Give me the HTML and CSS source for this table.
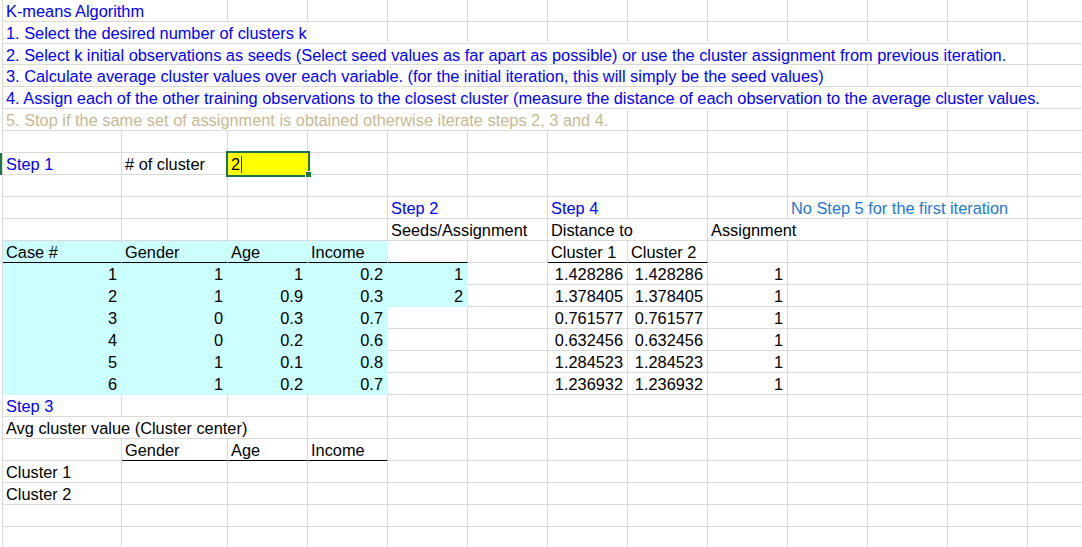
FILE: index.html
```html
<!DOCTYPE html>
<html>
<head>
<meta charset="utf-8">
<link rel="stylesheet" href="styles.css">
</head>
<body>
<div class="sheet">
  <!-- row 0 -->
  <div class="g"></div><div class="c span2 blue">K-means Algorithm</div>
  <div class="c"></div><div class="c"></div><div class="c"></div><div class="c"></div><div class="c"></div><div class="c"></div><div class="c"></div><div class="c"></div><div class="c"></div><div class="c"></div><div class="c"></div>
  <!-- row 1 -->
  <div class="g"></div><div class="c span4 blue">1. Select the desired number of clusters k</div>
  <div class="c"></div><div class="c"></div><div class="c"></div><div class="c"></div><div class="c"></div><div class="c"></div><div class="c"></div><div class="c"></div><div class="c"></div>
  <!-- row 2 -->
  <div class="g"></div><div class="c span12 blue">2. Select k initial observations as seeds (Select seed values as far apart as possible) or use the cluster assignment from previous iteration.</div>
  <div class="c"></div>
  <!-- row 3 -->
  <div class="g"></div><div class="c span10 blue">3. Calculate average cluster values over each variable. (for the initial iteration, this will simply be the seed values)</div>
  <div class="c"></div><div class="c"></div><div class="c"></div>
  <!-- row 4 -->
  <div class="g"></div><div class="c span13 blue">4. Assign each of the other training observations to the closest cluster (measure the distance of each observation to the average cluster values.</div>
  <!-- row 5 -->
  <div class="g"></div><div class="c span7 tan">5. Stop if the same set of assignment is obtained otherwise iterate steps 2, 3 and 4.</div>
  <div class="c"></div><div class="c"></div><div class="c"></div><div class="c"></div><div class="c"></div><div class="c"></div>
  <!-- row 6 -->
  <div class="g"></div>
  <div class="c"></div><div class="c"></div><div class="c"></div><div class="c"></div><div class="c"></div><div class="c"></div><div class="c"></div><div class="c"></div><div class="c"></div><div class="c"></div><div class="c"></div><div class="c"></div><div class="c"></div>
  <!-- row 7 -->
  <div class="g act"></div><div class="c blue">Step 1</div><div class="c"># of cluster</div>
  <div class="c sel">2<span class="caret"></span><span class="handle"></span></div>
  <div class="c"></div><div class="c"></div><div class="c"></div><div class="c"></div><div class="c"></div><div class="c"></div><div class="c"></div><div class="c"></div><div class="c"></div><div class="c"></div>
  <!-- row 8 -->
  <div class="g"></div>
  <div class="c"></div><div class="c"></div><div class="c"></div><div class="c"></div><div class="c"></div><div class="c"></div><div class="c"></div><div class="c"></div><div class="c"></div><div class="c"></div><div class="c"></div><div class="c"></div><div class="c"></div>
  <!-- row 9 -->
  <div class="g"></div>
  <div class="c"></div><div class="c"></div><div class="c"></div><div class="c"></div>
  <div class="c blue">Step 2</div><div class="c"></div><div class="c blue">Step 4</div><div class="c"></div><div class="c"></div>
  <div class="c span3 lblue">No Step 5 for the first iteration</div><div class="c"></div>
  <!-- row 10 -->
  <div class="g"></div>
  <div class="c"></div><div class="c"></div><div class="c"></div><div class="c"></div>
  <div class="c span2">Seeds/Assignment</div><div class="c span2">Distance to</div><div class="c span2">Assignment</div>
  <div class="c"></div><div class="c"></div><div class="c"></div>
  <!-- row 11 -->
  <div class="g"></div>
  <div class="c cy ul">Case #</div><div class="c cy ul">Gender</div><div class="c cy ul">Age</div><div class="c cy ul">Income</div>
  <div class="c ul"></div><div class="c"></div><div class="c ul">Cluster 1</div><div class="c ul">Cluster 2</div>
  <div class="c"></div><div class="c"></div><div class="c"></div><div class="c"></div><div class="c"></div>
  <!-- row 12 -->
  <div class="g"></div>
  <div class="c cy num">1</div><div class="c cy num">1</div><div class="c cy num">1</div><div class="c cy num">0.2</div>
  <div class="c cy num">1</div><div class="c"></div>
  <div class="c num">1.428286</div><div class="c num">1.428286</div><div class="c num">1</div>
  <div class="c"></div><div class="c"></div><div class="c"></div><div class="c"></div>
  <!-- row 13 -->
  <div class="g"></div>
  <div class="c cy num">2</div><div class="c cy num">1</div><div class="c cy num">0.9</div><div class="c cy num">0.3</div>
  <div class="c cy num">2</div><div class="c"></div>
  <div class="c num">1.378405</div><div class="c num">1.378405</div><div class="c num">1</div>
  <div class="c"></div><div class="c"></div><div class="c"></div><div class="c"></div>
  <!-- row 14 -->
  <div class="g"></div>
  <div class="c cy num">3</div><div class="c cy num">0</div><div class="c cy num">0.3</div><div class="c cy num">0.7</div>
  <div class="c"></div><div class="c"></div>
  <div class="c num">0.761577</div><div class="c num">0.761577</div><div class="c num">1</div>
  <div class="c"></div><div class="c"></div><div class="c"></div><div class="c"></div>
  <!-- row 15 -->
  <div class="g"></div>
  <div class="c cy num">4</div><div class="c cy num">0</div><div class="c cy num">0.2</div><div class="c cy num">0.6</div>
  <div class="c"></div><div class="c"></div>
  <div class="c num">0.632456</div><div class="c num">0.632456</div><div class="c num">1</div>
  <div class="c"></div><div class="c"></div><div class="c"></div><div class="c"></div>
  <!-- row 16 -->
  <div class="g"></div>
  <div class="c cy num">5</div><div class="c cy num">1</div><div class="c cy num">0.1</div><div class="c cy num">0.8</div>
  <div class="c"></div><div class="c"></div>
  <div class="c num">1.284523</div><div class="c num">1.284523</div><div class="c num">1</div>
  <div class="c"></div><div class="c"></div><div class="c"></div><div class="c"></div>
  <!-- row 17 -->
  <div class="g"></div>
  <div class="c cy num">6</div><div class="c cy num">1</div><div class="c cy num">0.2</div><div class="c cy num">0.7</div>
  <div class="c"></div><div class="c"></div>
  <div class="c num">1.236932</div><div class="c num">1.236932</div><div class="c num">1</div>
  <div class="c"></div><div class="c"></div><div class="c"></div><div class="c"></div>
  <!-- row 18 -->
  <div class="g"></div><div class="c blue">Step 3</div>
  <div class="c"></div><div class="c"></div><div class="c"></div><div class="c"></div><div class="c"></div><div class="c"></div><div class="c"></div><div class="c"></div><div class="c"></div><div class="c"></div><div class="c"></div><div class="c"></div>
  <!-- row 19 -->
  <div class="g"></div><div class="c span3">Avg cluster value (Cluster center)</div>
  <div class="c"></div><div class="c"></div><div class="c"></div><div class="c"></div><div class="c"></div><div class="c"></div><div class="c"></div><div class="c"></div><div class="c"></div><div class="c"></div>
  <!-- row 20 -->
  <div class="g"></div><div class="c"></div><div class="c ul">Gender</div><div class="c ul">Age</div><div class="c ul">Income</div>
  <div class="c"></div><div class="c"></div><div class="c"></div><div class="c"></div><div class="c"></div><div class="c"></div><div class="c"></div><div class="c"></div><div class="c"></div>
  <!-- row 21 -->
  <div class="g"></div><div class="c">Cluster 1</div>
  <div class="c"></div><div class="c"></div><div class="c"></div><div class="c"></div><div class="c"></div><div class="c"></div><div class="c"></div><div class="c"></div><div class="c"></div><div class="c"></div><div class="c"></div><div class="c"></div>
  <!-- row 22 -->
  <div class="g"></div><div class="c">Cluster 2</div>
  <div class="c"></div><div class="c"></div><div class="c"></div><div class="c"></div><div class="c"></div><div class="c"></div><div class="c"></div><div class="c"></div><div class="c"></div><div class="c"></div><div class="c"></div><div class="c"></div>
  <!-- row 23 -->
  <div class="g"></div>
  <div class="c"></div><div class="c"></div><div class="c"></div><div class="c"></div><div class="c"></div><div class="c"></div><div class="c"></div><div class="c"></div><div class="c"></div><div class="c"></div><div class="c"></div><div class="c"></div><div class="c"></div>
  <!-- row 24 -->
  <div class="g"></div>
  <div class="c"></div><div class="c"></div><div class="c"></div><div class="c"></div><div class="c"></div><div class="c"></div><div class="c"></div><div class="c"></div><div class="c"></div><div class="c"></div><div class="c"></div><div class="c"></div><div class="c"></div>
</div>
</body>
</html>
```
FILE: styles.css
```css
html, body {
  margin: 0;
  padding: 0;
  background: #ffffff;
  overflow: hidden;
}

.sheet {
  display: grid;
  grid-template-columns: 3px 119px 106px 80px 80px 80px 80px 80px 80px 80px 80px 80px 80px 80px;
  grid-template-rows: 22px 22px 21px;
  grid-auto-rows: 22px;
  width: 1108px;
  font-family: "Liberation Sans", Arial, sans-serif;
  font-size: 16.35px;
  color: #000000;
}

.g {
  box-sizing: border-box;
  border-right: 1px solid #d9d9d9;
}

.g.act {
  background: #217346;
}

.c {
  box-sizing: border-box;
  border-right: 1px solid #dadada;
  border-bottom: 1px solid #dadada;
  padding: 0 3px 0 3px;
  line-height: 22px;
  white-space: nowrap;
  overflow: visible;
  min-width: 0;
}

.span2 { grid-column: span 2; }
.span3 { grid-column: span 3; }
.span4 { grid-column: span 4; }
.span7 { grid-column: span 7; }
.span10 { grid-column: span 10; }
.span12 { grid-column: span 12; }
.span13 { grid-column: span 13; }

.blue { color: #0000ff; }
.lblue { color: #1f78d2; }
.tan { color: #c9b993; }

.num { text-align: right; padding-right: 4px; }

.cy {
  background: #ccffff;
  border-right-color: #ccffff;
  border-bottom-color: #ccffff;
}

.c.ul { border-bottom-color: #000000; }

.sel {
  position: relative;
  z-index: 2;
  background: #ffff00;
  border-right-color: #ffff00;
  border-bottom-color: #ffff00;
  outline: 2px solid #217346;
  outline-offset: 0;
}

.caret {
  display: inline-block;
  width: 1px;
  height: 17px;
  margin-left: 1px;
  vertical-align: -3px;
  background: #0000ff;
}

.handle {
  position: absolute;
  right: -5px;
  bottom: -4px;
  width: 5px;
  height: 5px;
  background: #217346;
  border: 1px solid #ffffff;
}
```
